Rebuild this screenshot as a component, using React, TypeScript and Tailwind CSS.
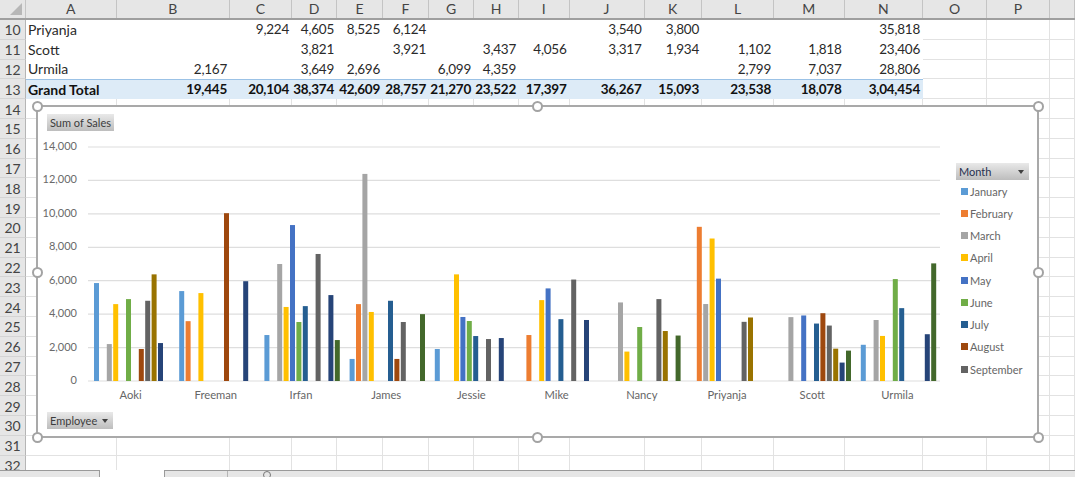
const columns = [
  { name: "A", width: "w-[90.5px]" },
  { name: "B", width: "w-[113.5px]" },
  { name: "C", width: "w-[62px]" },
  { name: "D", width: "w-[45px]" },
  { name: "E", width: "w-[46px]" },
  { name: "F", width: "w-[46px]" },
  { name: "G", width: "w-[45px]" },
  { name: "H", width: "w-[45px]" },
  { name: "I", width: "w-[50.5px]" },
  { name: "J", width: "w-[75px]" },
  { name: "K", width: "w-[57.5px]" },
  { name: "L", width: "w-[72px]" },
  { name: "M", width: "w-[70.5px]" },
  { name: "N", width: "w-[78.5px]" },
  { name: "O", width: "w-[64px]" },
  { name: "P", width: "w-[63px]" },
  { name: "", width: "w-[25px]" },
];

// rows of the pivot table, A to N
const pivotRows: Record<number, string[]> = {
  10: ["Priyanja", "", "9,224", "4,605", "8,525", "6,124", "", "", "", "3,540", "3,800", "", "", "35,818"],
  11: ["Scott", "", "", "3,821", "", "3,921", "", "3,437", "4,056", "3,317", "1,934", "1,102", "1,818", "23,406"],
  12: ["Urmila", "2,167", "", "3,649", "2,696", "", "6,099", "4,359", "", "", "", "2,799", "7,037", "28,806"],
  13: ["Grand Total", "19,445", "20,104", "38,374", "42,609", "28,757", "21,270", "23,522", "17,397", "36,267", "15,093", "23,538", "18,078", "3,04,454"],
};

const rowNumbers = Array.from({ length: 23 }, (_, i) => i + 10);

const months = [
  { name: "January", color: "#5b9bd5" },
  { name: "February", color: "#ed7d31" },
  { name: "March", color: "#a5a5a5" },
  { name: "April", color: "#ffc000" },
  { name: "May", color: "#4472c4" },
  { name: "June", color: "#70ad47" },
  { name: "July", color: "#255e91" },
  { name: "August", color: "#9e480e" },
  { name: "September", color: "#636363" },
  { name: "October", color: "#997300" },
  { name: "November", color: "#264478" },
  { name: "December", color: "#43682b" },
];

// sales per month, 0 = no bar
const employees = [
  { name: "Aoki", sales: [5860, 0, 2210, 4600, 0, 4900, 0, 1915, 4800, 6380, 2270, 0] },
  { name: "Freeman", sales: [5380, 3580, 0, 5260, 0, 0, 0, 10040, 0, 0, 5970, 0] },
  { name: "Irfan", sales: [2750, 0, 7000, 4430, 9330, 3530, 4480, 0, 7600, 0, 5140, 2450] },
  { name: "James", sales: [1320, 4600, 12390, 4130, 0, 0, 4800, 1320, 3530, 0, 0, 4000] },
  { name: "Jessie", sales: [1915, 0, 0, 6380, 3830, 3590, 2690, 0, 2510, 0, 2570, 0] },
  { name: "Mike", sales: [0, 2750, 0, 4840, 5540, 0, 3700, 0, 6070, 0, 3650, 0] },
  { name: "Nancy", sales: [0, 0, 4700, 1760, 0, 3230, 0, 0, 4900, 2990, 0, 2720] },
  { name: "Priyanja", sales: [0, 9224, 4605, 8525, 6124, 0, 0, 0, 3540, 3800, 0, 0] },
  { name: "Scott", sales: [0, 0, 3821, 0, 3921, 0, 3437, 4056, 3317, 1934, 1102, 1818] },
  { name: "Urmila", sales: [2167, 0, 3649, 2696, 0, 6099, 4359, 0, 0, 0, 2799, 7037] },
];

const ticks = [0, 2000, 4000, 6000, 8000, 10000, 12000, 14000];
const baseY = 381;
const pxPerUnit = 234 / 14000;

function PlotArea() {
  return (
    <svg width="910" height="281" viewBox="38 131 910 281" className="shrink-0">
      {ticks.map((t) => {
        const y = baseY - t * pxPerUnit;
        return (
          <g key={t}>
            <line x1="88" x2="940" y1={y} y2={y} stroke="#dedede" strokeWidth="1.2" />
            <text x="77" y={y + 3} textAnchor="end" fontSize="11" fill="#6a6a6a">
              {t.toLocaleString("en-US")}
            </text>
          </g>
        );
      })}
      {employees.map((emp, i) => (
        <g key={emp.name}>
          {emp.sales.map((v, m) =>
            v > 0 ? (
              <rect
                key={m}
                x={94 + 85.2 * i + 6.4 * m}
                y={baseY - v * pxPerUnit}
                width="5"
                height={v * pxPerUnit}
                fill={months[m].color}
              />
            ) : null
          )}
          <text x={130.6 + 85.2 * i} y="399" textAnchor="middle" fontSize="11.2" fill="#666666">
            {emp.name}
          </text>
        </g>
      ))}
    </svg>
  );
}

function Handle({ className }: { className: string }) {
  return <div className={`absolute h-[11px] w-[11px] rounded-full border-2 border-[#a3a3a3] bg-white ${className}`} />;
}

function FieldButton({ label, arrow, className }: { label: string; arrow?: boolean; className: string }) {
  return (
    <div className={`flex h-[17px] items-center justify-between whitespace-nowrap bg-gradient-to-b from-[#e9e9e9] to-[#bdbdbd] pl-[3px] pr-[5px] text-[11px] text-[#3c3c3c] ${className}`}>
      <span>{label}</span>
      {arrow && <span className="h-0 w-0 border-x-[3.5px] border-t-[4px] border-x-transparent border-t-[#404040]" />}
    </div>
  );
}

function Chart() {
  return (
    <div className="absolute left-[36px] top-[105px] flex h-[333px] w-[1003px] flex-col border-2 border-[#a9a9a9] bg-white">
      <div className="pl-[9px] pt-[7px]">
        <FieldButton label="Sum of Sales" className="w-[67px]" />
      </div>
      <div className="flex h-[281px]">
        <PlotArea />
        <div className="ml-[8px] pt-[32px]">
          <FieldButton label="Month" arrow className="w-[73px] text-[#27304f]" />
          <ul className="pl-[5px]">
            {months.slice(0, 9).map((m) => (
              <li key={m.name} className="flex h-[22.25px] items-center gap-[2px] text-[11px] text-[#666666]">
                <span className="h-[7px] w-[7px]" style={{ backgroundColor: m.color }} />
                {m.name}
              </li>
            ))}
          </ul>
        </div>
      </div>
      <div className="pl-[9px]">
        <FieldButton label="Employee" arrow className="w-[66px]" />
      </div>
      <Handle className="left-[-6.5px] top-[-6.5px]" />
      <Handle className="left-[493.5px] top-[-6.5px]" />
      <Handle className="left-[994.5px] top-[-6.5px]" />
      <Handle className="left-[-6.5px] top-[159.5px]" />
      <Handle className="left-[994.5px] top-[159.5px]" />
      <Handle className="left-[-6.5px] top-[324.5px]" />
      <Handle className="left-[493.5px] top-[324.5px]" />
      <Handle className="left-[994.5px] top-[324.5px]" />
    </div>
  );
}

function Row({ n }: { n: number }) {
  const values = pivotRows[n];
  const total = n === 13;
  return (
    <div className="flex h-[19.8px]">
      <div className="flex w-[26px] shrink-0 items-center justify-center border-b border-r border-b-[#d4d4d4] border-r-[#b5b5b5] bg-[#e6e6e6] pt-[2px] text-[#444444]">
        {n}
      </div>
      {columns.map((col, i) => {
        const value = values?.[i];
        if (values && i < 14) {
          return (
            <div
              key={col.name}
              className={`flex shrink-0 items-center whitespace-nowrap ${col.width} ${i === 0 ? "justify-start pl-[2px]" : "justify-end pr-[3px] text-[13.5px] tracking-[-0.25px]"} ${total ? "border-t border-t-[#9bc2e6] bg-[#ddebf7] font-bold text-[#111111]" : "text-[#2a2a2a]"}`}
            >
              {value}
            </div>
          );
        }
        return <div key={col.name} className={`shrink-0 border-b border-r border-[#e2e2e2] ${col.width}`} />;
      })}
    </div>
  );
}

export default function App() {
  return (
    <div className="flex h-[477px] w-[1075px] flex-col overflow-hidden bg-white font-['Lato',sans-serif] text-[14px] leading-none">
      <div className="relative h-[470px] overflow-hidden">
        <div className="flex h-[20px] border-b-2 border-[#9f9f9f] bg-[#e6e6e6] text-[#444444]">
          <div className="flex w-[26px] shrink-0 items-end justify-end border-r border-[#c4c4c4] pb-[3px] pr-[3px]">
            <svg width="12" height="12" viewBox="0 0 12 12">
              <polygon points="0,12 12,12 12,0" fill="#b7b7b7" />
            </svg>
          </div>
          {columns.map((col) => (
            <div key={col.name} className={`flex shrink-0 items-center justify-center border-r border-[#c4c4c4] ${col.width}`}>
              {col.name}
            </div>
          ))}
        </div>
        {rowNumbers.map((n) => (
          <Row key={n} n={n} />
        ))}
        <Chart />
      </div>
      <div className="flex h-[7px] border-t border-[#9a9a9a] bg-[#e6e6e6]">
        <div className="w-[100px] border-r border-[#9a9a9a]" />
        <div className="mt-[-1px] w-[65px] border-r border-[#9a9a9a] bg-white" />
        <div className="w-[63px] border-r border-[#b5b5b5]" />
        <div className="ml-[35px] h-[8px] w-[8px] rounded-full border border-[#777777]" />
      </div>
    </div>
  );
}
